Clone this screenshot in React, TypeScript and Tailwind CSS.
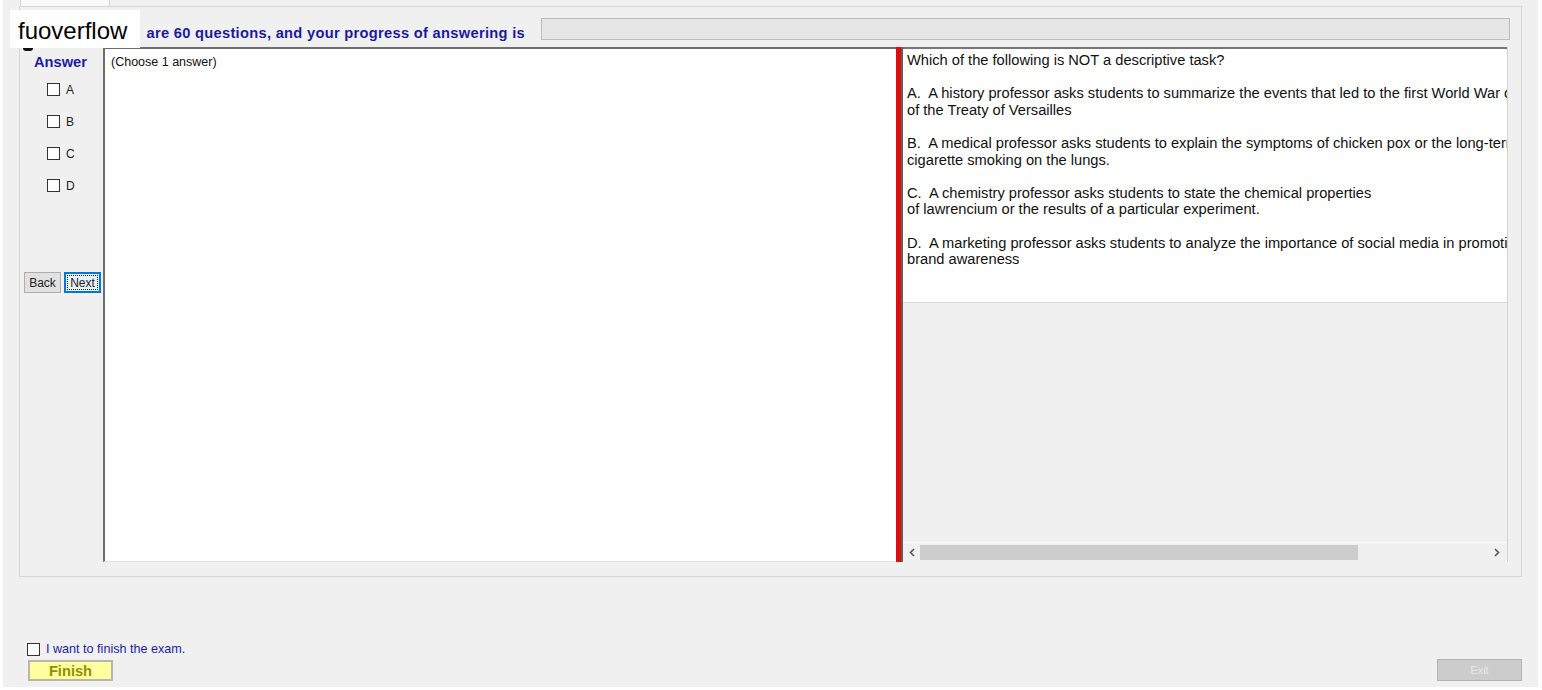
const questionLines = [
  "Which of the following is NOT a descriptive task?",
  "",
  "A.  A history professor asks students to summarize the events that led to the first World War or the signing",
  "of the Treaty of Versailles",
  "",
  "B.  A medical professor asks students to explain the symptoms of chicken pox or the long-term effects of",
  "cigarette smoking on the lungs.",
  "",
  "C.  A chemistry professor asks students to state the chemical properties",
  "of lawrencium or the results of a particular experiment.",
  "",
  "D.  A marketing professor asks students to analyze the importance of social media in promoting",
  "brand awareness",
];

const options = ["A", "B", "C", "D"];

function Checkbox() {
  return <div className="w-[13px] h-[13px] bg-white border border-[#333333] shrink-0"></div>;
}

export default function App() {
  return (
    <div
      className="relative w-[1542px] h-[690px] bg-white overflow-hidden"
      style={{ fontFamily: '"Liberation Sans", Arial, sans-serif' }}
    >
      <div className="ml-[3px] w-[1535px] h-[687px] bg-[#f0f0f0] flex flex-col">
        {/* tab strip */}
        <div className="h-[6px] flex">
          <div className="ml-[17px] w-[90px] h-full bg-[#fafafa] border-x border-[#d4d4d4]"></div>
        </div>

        {/* tab page */}
        <div className="ml-[16px] w-[1503px] h-[571px] border border-[#d6d6d6] bg-[#f0f0f0] flex flex-col">
          <div className="mt-[11px] h-[22px] flex items-start">
            <div className="ml-[4px] w-[501px] mt-[7px] text-right whitespace-nowrap font-bold text-[14.67px] leading-[17px] tracking-[0.3px] text-[#1b1b9c]">
              are 60 questions, and your progress of answering is
            </div>
            <div className="ml-[16px] w-[969px] h-[22px] bg-[#e6e6e6] border border-[#bcbcbc]"></div>
          </div>

          <div className="mt-[7px] ml-[4px] h-[515px] flex">
            {/* answer column */}
            <div className="w-[79px] flex flex-col">
              <div className="pl-[10px] pt-[7px] font-bold text-[14.67px] text-[#1b1ba5] leading-[17px]">Answer</div>
              <div className="mt-[12px] flex flex-col gap-[19px] pl-[23px]">
                {options.map((o) => (
                  <div key={o} className="flex items-center gap-[6px] h-[13px]">
                    <Checkbox />
                    <span className="text-[12px] text-[#222222] leading-none">{o}</span>
                  </div>
                ))}
              </div>
              <div className="mt-[80px] flex gap-[3px]">
                <div className="w-[37px] h-[21px] bg-[#e1e1e1] border border-[#adadad] flex items-center justify-center text-[12px] text-[#222222]">
                  Back
                </div>
                <div className="w-[37px] h-[21px] bg-[#e5f1fb] border-2 border-[#0078d7] flex items-center justify-center">
                  <div className="w-[31px] h-[15px] border border-dotted border-[#222222] flex items-center justify-center text-[12px] text-[#222222]">
                    Next
                  </div>
                </div>
              </div>
            </div>

            {/* choose panel */}
            <div className="w-[793px] h-full bg-white border-l-2 border-t-2 border-[#6d6d6d] border-b border-b-[#e3e3e3] pl-[6px] pt-[6px]">
              <div className="text-[12.5px] text-[#111111] leading-[15px]">(Choose 1 answer)</div>
            </div>

            {/* splitter */}
            <div className="w-[7px] h-full flex">
              <div className="w-[5px] bg-[#e00d0d]"></div>
              <div className="w-[2px] bg-[#5e5e5e]"></div>
            </div>

            {/* question panel */}
            <div className="w-[605px] h-full flex flex-col border-r border-[#d4d4d4]">
              <div className="h-[256px] bg-white border-t-2 border-[#777777] border-b border-b-[#d6d6d6] pl-[4px] pt-[3px] overflow-hidden">
                {questionLines.map((line, i) => (
                  <div key={i} className="h-[16.6px] whitespace-pre text-[14.67px] leading-[16.6px] text-[#111111]">
                    {line}
                  </div>
                ))}
              </div>
              <div className="flex-1"></div>
              <div className="h-[19px] mb-[1px] bg-[#f0f0f0] border-t border-white flex items-center">
                <div className="w-[17px] flex justify-center">
                  <svg width="6" height="9" viewBox="0 0 6 9">
                    <path d="M5 1 L1.5 4.5 L5 8" fill="none" stroke="#555555" strokeWidth="1.6" />
                  </svg>
                </div>
                <div className="w-[438px] h-[15px] bg-[#cdcdcd]"></div>
                <div className="flex-1"></div>
                <div className="w-[17px] flex justify-center mr-[2px]">
                  <svg width="6" height="9" viewBox="0 0 6 9">
                    <path d="M1 1 L4.5 4.5 L1 8" fill="none" stroke="#555555" strokeWidth="1.6" />
                  </svg>
                </div>
              </div>
            </div>
          </div>
        </div>

        {/* finish area */}
        <div className="mt-[64px] ml-[24px] h-[16px] flex items-center gap-[6px]">
          <Checkbox />
          <span className="text-[12.6px] text-[#1c1ca0] leading-none">I want to finish the exam.</span>
        </div>
        <div className="mt-[2px] ml-[25px] mr-[16px] flex justify-between items-end">
          <div className="w-[85px] h-[21px] bg-[#ffffa0] border-2 border-[#b8b8a8] flex items-center justify-center font-bold text-[14.67px] text-[#8f8f00]">
            Finish
          </div>
          <div className="w-[85px] h-[22px] bg-[#cccccc] border border-[#b4b4b4] flex items-center justify-center text-[11px] text-[#e8e8e8]">
            Exit
          </div>
        </div>
      </div>

      {/* watermark */}
      <div className="absolute left-[23px] top-[45px] w-[10px] h-[6px] rounded-full bg-[#111111]"></div>
      <div className="absolute left-[10px] top-[10px] w-[130px] h-[38px] bg-white flex items-center pl-[8px] pt-[4px] text-[24px] text-black">
        fuoverflow
      </div>
    </div>
  );
}
